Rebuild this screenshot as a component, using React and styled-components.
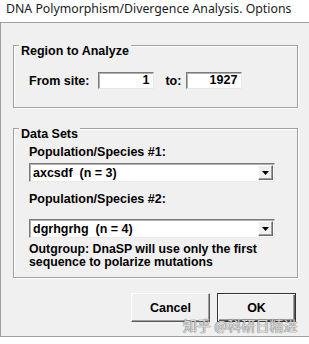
import styled, { createGlobalStyle } from "styled-components";

const GlobalStyle = createGlobalStyle`
    html, body {
        margin: 0;
        padding: 0;
        background: #ffffff;
    }
    body {
        font-family: "Liberation Sans", Arial, sans-serif;
        width: 309px;
        height: 344px;
        overflow: hidden;
    }
`;

const Window = styled.div`
    position: relative;
    width: 309px;
    height: 344px;
    display: flex;
    flex-direction: column;
`;

const TitleBar = styled.div`
    height: 22px;
    padding-left: 6px;
    font-family: "Noto Sans", "Noto Sans CJK SC", sans-serif;
    font-size: 12.3px;
    line-height: 18px;
    color: #1a1a1a;
    white-space: nowrap;
`;

const Panel = styled.div`
    height: 315px;
    box-sizing: border-box;
    background: #f0f0f0;
    border: 1px solid #a0a0a0;
    border-right: none;
    padding: 22px 11px 0 12px;
    display: flex;
    flex-direction: column;
`;

const GroupBox = styled.div`
    box-sizing: border-box;
    height: ${(p) => p.$height}px;
    margin-bottom: ${(p) => p.$gap || 0}px;
    border: 1px solid #a0a0a0;
    box-shadow: 1px 1px 0 #ffffff, inset 1px 1px 0 #ffffff;
    padding: 0 0 0 15px;
    display: flex;
    flex-direction: column;
    align-items: flex-start;
`;

const Legend = styled.div`
    margin: -2px 0 0 -10px;
    padding: 0 2px;
    height: 14px;
    line-height: 14px;
    background: #f0f0f0;
    font-weight: bold;
    font-size: 12.5px;
    color: #000;
`;

const SiteRow = styled.div`
    margin-top: 14px;
    display: flex;
    align-items: center;
    height: 17px;
`;

const Label = styled.span`
    font-weight: bold;
    font-size: 12.5px;
    line-height: 14px;
    color: #000;
    margin-left: ${(p) => p.$left || 0}px;
    margin-right: ${(p) => p.$gap || 0}px;
    margin-top: ${(p) => p.$top || 0}px;
    display: block;
`;

const NumberBox = styled.div`
    box-sizing: border-box;
    width: 56px;
    height: 17px;
    background: #fff;
    border: 1px solid;
    border-color: #7a7a7a #e8e8e8 #e8e8e8 #7a7a7a;
    box-shadow: inset 1px 1px 0 #b0b0b0;
    padding-right: 4px;
    text-align: right;
    font-weight: bold;
    font-size: 12.5px;
    line-height: 15px;
    color: #000;
`;

const Select = styled.div`
    box-sizing: border-box;
    width: 246px;
    height: 19px;
    margin-top: ${(p) => p.$top}px;
    background: #fff;
    border: 1px solid;
    border-color: #7a7a7a #e8e8e8 #e8e8e8 #7a7a7a;
    box-shadow: inset 1px 1px 0 #b0b0b0;
    display: flex;
    align-items: center;
    justify-content: space-between;
    padding: 0 1px 0 3px;
    font-weight: bold;
    font-size: 12.5px;
    color: #000;
    white-space: pre;
`;

const DropButton = styled.div`
    box-sizing: border-box;
    width: 15px;
    height: 15px;
    background: #f0f0f0;
    border: 1px solid;
    border-color: #ffffff #6a6a6a #6a6a6a #ffffff;
    box-shadow: inset -1px -1px 0 #a0a0a0;
    display: flex;
    align-items: center;
    justify-content: center;
`;

const Note = styled.p`
    margin: 5px 0 0 0;
    font-weight: bold;
    font-size: 12.3px;
    line-height: 13px;
    color: #000;
`;

const ButtonRow = styled.div`
    margin-top: 15px;
    padding-right: 2px;
    display: flex;
    justify-content: flex-end;
    gap: 7px;
`;

const Button = styled.div`
    box-sizing: border-box;
    width: 79px;
    height: 29px;
    background: #f0f0f0;
    border: 1px solid;
    border-color: ${(p) => (p.$default ? "#333333" : "#ffffff #5a5a5a #5a5a5a #ffffff")};
    box-shadow: ${(p) =>
        p.$default
            ? "inset 1px 1px 0 #ffffff, inset -1px -1px 0 #5a5a5a, inset -2px -2px 0 #a0a0a0"
            : "inset -1px -1px 0 #a0a0a0"};
    display: flex;
    align-items: center;
    justify-content: center;
    font-weight: bold;
    font-size: 12.5px;
    color: #000;
`;

const Watermark = styled.div`
    position: absolute;
    left: 183px;
    top: 316px;
    font-family: "Noto Sans CJK SC", sans-serif;
    font-size: 14px;
    line-height: 18px;
    color: rgba(255, 255, 255, 0.8);
    text-shadow: 0 0 1px rgba(80, 80, 80, 0.9), 0 0 1px rgba(80, 80, 80, 0.9);
    white-space: nowrap;
`;

function Arrow() {
    return (
        <svg width="7" height="4" viewBox="0 0 7 4">
            <path d="M0 0 H7 L3.5 4 Z" fill="#000" />
        </svg>
    );
}

export default function App() {
    return (
        <Window>
            <GlobalStyle />
            <TitleBar>DNA Polymorphism/Divergence Analysis. Options</TitleBar>
            <Panel>
                <GroupBox $height={63} $gap={20}>
                    <Legend>Region to Analyze</Legend>
                    <SiteRow>
                        <Label $gap={9}>From site:</Label>
                        <NumberBox>1</NumberBox>
                        <Label $left={11} $gap={5}>to:</Label>
                        <NumberBox>1927</NumberBox>
                    </SiteRow>
                </GroupBox>
                <GroupBox $height={150}>
                    <Legend>Data Sets</Legend>
                    <Label $top={4}>Population/Species #1:</Label>
                    <Select $top={4}>
                        <span>axcsdf  (n = 3)</span>
                        <DropButton><Arrow /></DropButton>
                    </Select>
                    <Label $top={10}>Population/Species #2:</Label>
                    <Select $top={13}>
                        <span>dgrhgrhg  (n = 4)</span>
                        <DropButton><Arrow /></DropButton>
                    </Select>
                    <Note>
                        Outgroup: DnaSP will use only the first
                        <br />
                        sequence to polarize mutations
                    </Note>
                </GroupBox>
                <ButtonRow>
                    <Button>Cancel</Button>
                    <Button $default>OK</Button>
                </ButtonRow>
            </Panel>
            <Watermark>知乎 @科研日精进</Watermark>
        </Window>
    );
}
